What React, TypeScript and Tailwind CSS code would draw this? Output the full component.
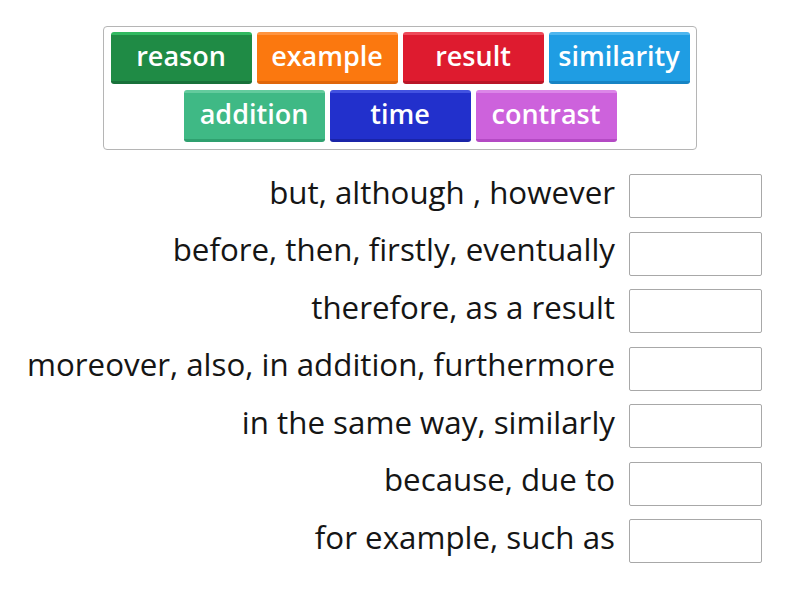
const tiles = [
  [
    { label: 'reason', cls: 'bg-[#1f8b45] border-t-[#31b960] border-b-[#18713a]' },
    { label: 'example', cls: 'bg-[#fb780f] border-t-[#ff9440] border-b-[#e0660a]' },
    { label: 'result', cls: 'bg-[#de1b2f] border-t-[#ee4a5a] border-b-[#b91527]' },
    { label: 'similarity', cls: 'bg-[#1f9de3] border-t-[#4db6ef] border-b-[#1784c4]' },
  ],
  [
    { label: 'addition', cls: 'bg-[#3fb985] border-t-[#63cb9d] border-b-[#2fa06f]' },
    { label: 'time', cls: 'bg-[#2230cc] border-t-[#4252e0] border-b-[#1a24a8]' },
    { label: 'contrast', cls: 'bg-[#cd62dc] border-t-[#dc86e8] border-b-[#b44ac4]' },
  ],
];

const rows = [
  'but, although , however',
  'before, then, firstly, eventually',
  'therefore, as a result',
  'moreover, also, in addition, furthermore',
  'in the same way, similarly',
  'because, due to',
  'for example, such as',
];

export default function App() {
  return (
    <div className="w-[800px] h-[600px] bg-white font-['Open_Sans',sans-serif] text-[#151515] pt-[26px]">
      <div className="mx-auto w-[594px] h-[124px] rounded-[4px] border border-[#b5b5b5] flex flex-col items-center gap-[6px] pt-[5px]">
        {tiles.map((row, i) => (
          <div key={i} className="flex gap-[5px]">
            {row.map((t) => (
              <div
                key={t.label}
                className={`w-[141px] h-[52px] rounded-[3px] border-t-[3px] border-b-[3px] flex items-center justify-center pb-[5px] text-white text-[27px] leading-none font-semibold ${t.cls}`}
              >
                {t.label}
              </div>
            ))}
          </div>
        ))}
      </div>

      <div className="mt-[24px] flex flex-col gap-[13.5px] pr-[38px]">
        {rows.map((r) => (
          <div key={r} className="flex items-center justify-end gap-[14px] h-[44px]">
            <span className="text-[31.3px] leading-none pb-[7px]">{r}</span>
            <div className="w-[133px] h-[44px] border border-[#a8a8a8] rounded-[2px] bg-white" />
          </div>
        ))}
      </div>
    </div>
  );
}
